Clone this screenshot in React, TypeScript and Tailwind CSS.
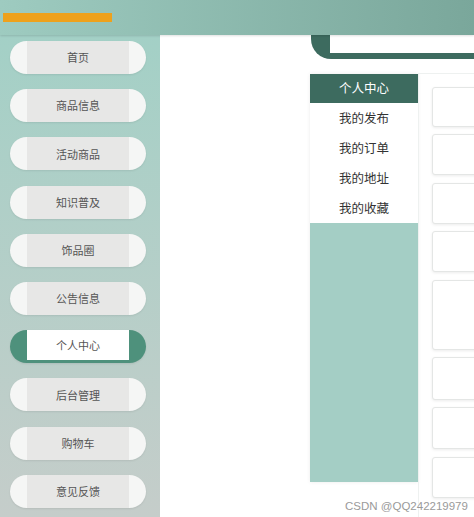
import React from "react";

const navItems = [
  "首页",
  "商品信息",
  "活动商品",
  "知识普及",
  "饰品圈",
  "公告信息",
  "个人中心",
  "后台管理",
  "购物车",
  "意见反馈",
];

const subMenu = ["我的发布", "我的订单", "我的地址", "我的收藏"];

const cardHeights = ["h-[40px]", "h-[41px]", "h-[41px]", "h-[41px]", "h-[70px]", "h-[43px]", "h-[42px]", "h-[41px]"];

const font = { fontFamily: '"Noto Sans CJK SC", "Microsoft YaHei", sans-serif' };

const App = () => {
  const active = "个人中心";

  return (
    <div className="relative flex flex-col w-[474px] h-[517px] overflow-hidden bg-white" style={font}>
      {/* header */}
      <div className="relative z-10 h-[35px] shrink-0 flex items-start bg-gradient-to-r from-[#9ecbc0] to-[#7aa79b] shadow-[0_1px_2px_rgba(0,0,0,0.12)]">
        <div className="mt-[13px] ml-[3px] w-[109px] h-[9px] bg-[#eea11c]" />
      </div>

      <div className="flex flex-1 min-h-0">
        {/* sidebar */}
        <div className="w-[160px] shrink-0 flex flex-col gap-[15.2px] pt-[6px] bg-gradient-to-b from-[#a3d0c6] to-[#c5cdca]">
          {navItems.map((item) => {
            const isActive = item === active;
            return (
              <div
                key={item}
                className={
                  "ml-[10px] mr-[14px] h-[33px] rounded-full flex justify-center shadow-[0_1px_2px_rgba(0,0,0,0.08)] " +
                  (isActive ? "bg-[#4e917c]" : "bg-[#f5f6f5]")
                }
              >
                <div
                  className={
                    "w-[102px] flex items-center justify-center text-[11px] text-[#555] " +
                    (isActive ? "bg-white h-[30px]" : "bg-[#e7e7e6]")
                  }
                >
                  {item}
                </div>
              </div>
            );
          })}
        </div>

        {/* main */}
        <div className="flex-1 flex flex-col">
          <div className="ml-[151px] bg-[#3d6b5f] rounded-bl-[20px] pl-[19px] pb-[6px]">
            <div className="h-[18px] bg-white" />
          </div>

          <div className="flex ml-[150px] mt-[15px]">
            <div className="w-[108px] h-[408px] shrink-0 flex flex-col bg-[#a4cec5] shadow-[0_0_4px_rgba(0,0,0,0.08)]">
              <div className="h-[29px] flex items-center justify-center bg-[#3d6b5f] text-white text-[12.5px]">
                个人中心
              </div>
              <div className="bg-white">
                {subMenu.map((s) => (
                  <div key={s} className="h-[30px] flex items-center justify-center text-[12.5px] text-[#333]">
                    {s}
                  </div>
                ))}
              </div>
            </div>

            <div className="flex-1 h-[460px] -mt-px border-l border-t border-[#eef1f0] pl-[13px] pt-[13px] flex flex-col gap-[7.4px]">
              {cardHeights.map((h, i) => (
                <div
                  key={i}
                  className={h + " w-[120px] shrink-0 bg-white border border-[#e4e6e5] rounded-[3px] shadow-[0_1px_3px_rgba(0,0,0,0.08)]"}
                />
              ))}
            </div>
          </div>
        </div>
      </div>

      {/* watermark */}
      <div
        className="absolute left-[345px] top-[498px] text-[11.5px] text-[#9a9a9a] [text-shadow:0_0_2px_#fff]"
        style={{ fontFamily: '"Liberation Sans", Arial, sans-serif' }}
      >
        CSDN @QQ242219979
      </div>
    </div>
  );
};

export default App;
